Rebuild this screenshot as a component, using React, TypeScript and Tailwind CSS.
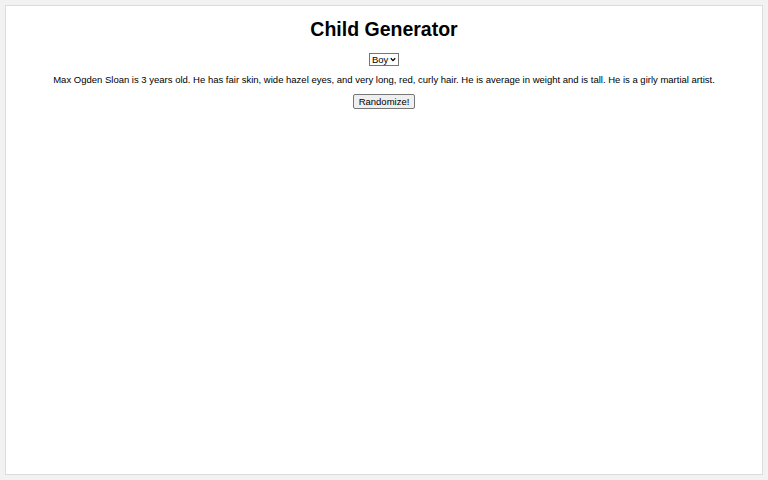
import React, { useState } from 'react';

export default function App() {
  const [gender, setGender] = useState('Boy');

  return (
    <div className="min-h-[480px] w-full bg-[#f2f2f2] p-[5px] font-['Liberation_Sans',Arial,sans-serif]">
      <div className="h-[470px] border border-[#dcdcdc] bg-white text-center text-black">
        {/* Title */}
        <h1 className="pt-[11px] text-[19.5px] font-bold leading-[24px]">Child Generator</h1>

        {/* Gender picker */}
        <div className="mt-[12px] flex justify-center">
          <div className="relative">
            <select
              value={gender}
              onChange={(e) => setGender(e.target.value)}
              className="block h-[13px] w-[30px] appearance-none border border-[#767676] bg-white pl-[2px] text-left text-[9.5px] leading-[11px]"
            >
              <option>Boy</option>
              <option>Girl</option>
            </select>
            <svg
              className="pointer-events-none absolute right-[3px] top-[4px]"
              width="6"
              height="5"
              viewBox="0 0 6 5"
              fill="none"
            >
              <path d="M0.8 1.2 L3 3.6 L5.2 1.2" stroke="#000" strokeWidth="1.3" />
            </svg>
          </div>
        </div>

        {/* Description */}
        <p className="mt-[7px] text-[9.5px] leading-[13px]">
          Max Ogden Sloan is 3 years old. He has fair skin, wide hazel eyes, and very long, red, curly hair. He is average in weight and is tall. He is a girly martial artist.
        </p>

        <div className="mt-[8px] flex justify-center">
          <button className="h-[15px] w-[62px] rounded-[2px] border border-[#767676] bg-[#efefef] text-[9.5px] leading-[12px]">
            Randomize!
          </button>
        </div>
      </div>
    </div>
  );
}
